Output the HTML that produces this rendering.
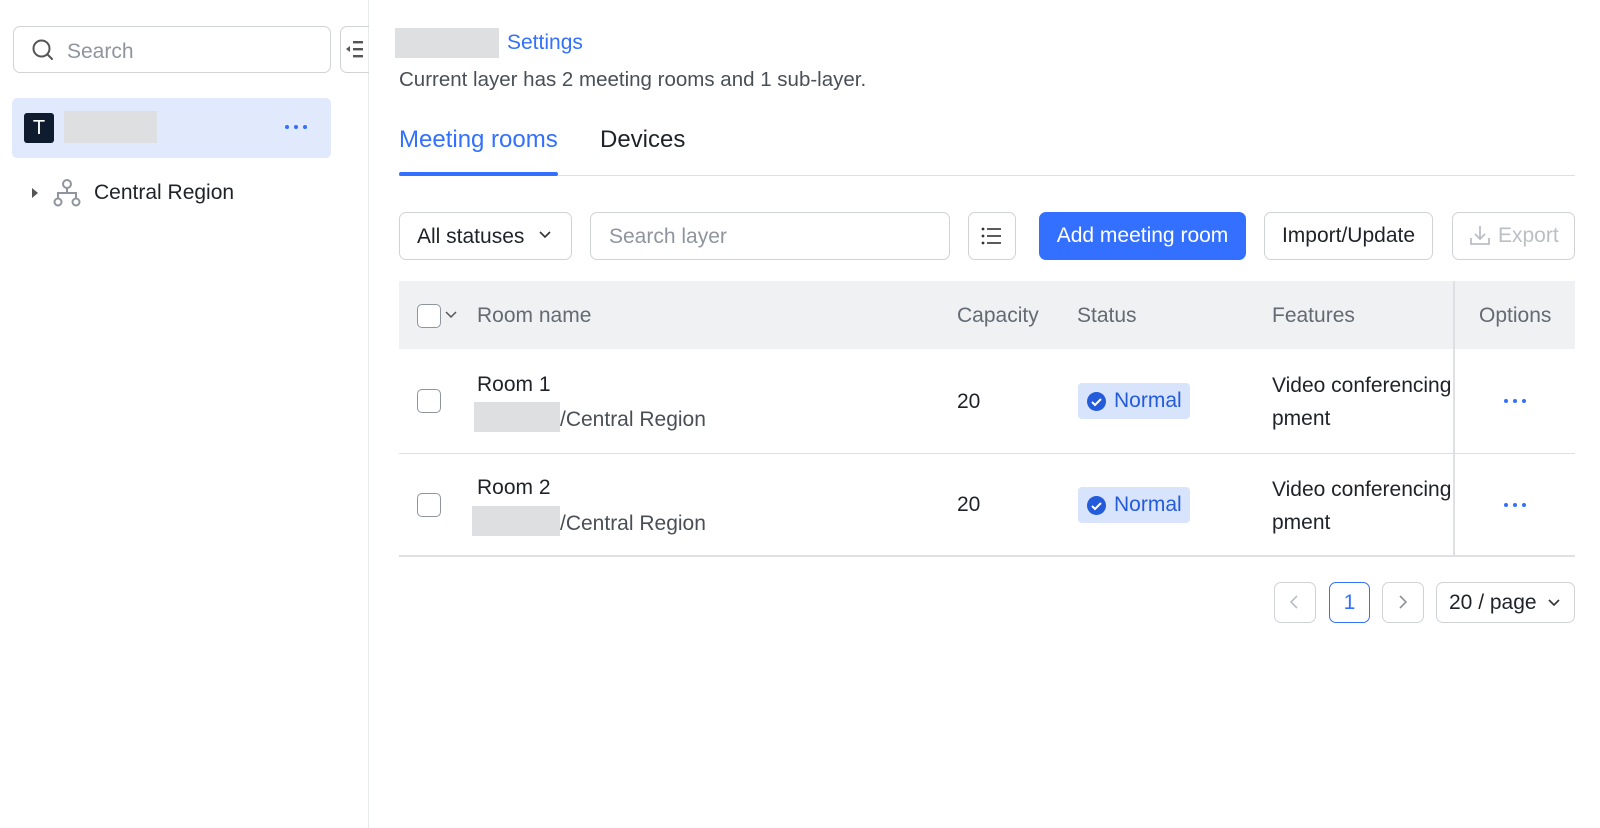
<!DOCTYPE html>
<html><head><meta charset="utf-8"><style>
*{box-sizing:border-box;margin:0;padding:0}
body{width:1600px;height:828px;background:#fff;font-family:"Liberation Sans",Arial,sans-serif;color:#1f2329;position:relative;overflow:hidden}
.a{position:absolute}
.box{border:1px solid #d0d3d6;border-radius:7px;background:#fff}
.t{white-space:nowrap}
.cb{position:absolute;width:24px;height:24px;border:1px solid #8f959e;border-radius:5px;background:#fff}
.dots{position:absolute;display:flex;gap:5px}
.dots i{width:4px;height:4px;border-radius:50%;background:#3370ff;display:block}
.badge{position:absolute;left:1078px;width:112px;height:36px;background:#d8e4fc;border-radius:4px;color:#245bdb;font-size:21px;line-height:36px;padding-left:36px}
.badge svg{position:absolute;left:9px;top:9px}
</style></head><body>
<div class="a" style="left:368px;top:0;width:1px;height:828px;background:#e8e9eb"></div>
<div class="a box" style="left:13px;top:26px;width:318px;height:47px"></div>
<svg class="a" style="left:31px;top:38px" width="24" height="24" viewBox="0 0 24 24"><circle cx="10.5" cy="10.5" r="8" fill="none" stroke="#555" stroke-width="2"/><path d="M16.5 16.5l4.5 4.5" stroke="#555" stroke-width="2" stroke-linecap="round"/></svg>
<div class="a t" style="left:67px;top:40px;font-size:21px;color:#8f959e">Search</div>
<div class="a" style="left:340px;top:26px;width:40px;height:47px;border:1px solid #d0d3d6;border-radius:7px 0 0 7px;border-right:none"></div>
<svg class="a" style="left:345px;top:39px" width="20" height="20" viewBox="0 0 20 20"><path d="M1 10l4-3v6z" fill="#555"/><rect x="8" y="2" width="10" height="2.4" fill="#555"/><rect x="8" y="9" width="10" height="2.4" fill="#555"/><rect x="8" y="16" width="10" height="2.4" fill="#555"/></svg>
<div class="a" style="left:369px;top:0;width:20px;height:828px;background:#fff"></div>
<div class="a" style="left:12px;top:98px;width:319px;height:60px;background:#e1eafd;border-radius:5px"></div>
<div class="a" style="left:24px;top:113px;width:30px;height:30px;background:#0f1b2e;border-radius:3px;color:#fff;font-size:20px;text-align:center;line-height:30px">T</div>
<div class="a" style="left:64px;top:111px;width:93px;height:32px;background:#dedfe1"></div>
<div class="dots" style="left:285px;top:125px"><i></i><i></i><i></i></div>
<svg class="a" style="left:30px;top:186px" width="10" height="14"><path d="M2 2l6 5-6 5z" fill="#555"/></svg>
<svg class="a" style="left:52px;top:178px" width="30" height="30" viewBox="0 0 30 30"><circle cx="15" cy="6" r="4" fill="none" stroke="#8f959e" stroke-width="2"/><circle cx="6" cy="24" r="3.5" fill="none" stroke="#8f959e" stroke-width="2"/><circle cx="24" cy="24" r="3.5" fill="none" stroke="#8f959e" stroke-width="2"/><path d="M15 10v5M6 20.5V15h18v5.5" fill="none" stroke="#8f959e" stroke-width="2"/></svg>
<div class="a t" style="left:94px;top:181px;font-size:21px">Central Region</div>
<div class="a" style="left:395px;top:28px;width:104px;height:30px;background:#dedfe1"></div>
<div class="a t" style="left:507px;top:31px;font-size:21px;color:#3370ff">Settings</div>
<div class="a t" style="left:399px;top:68px;font-size:20.5px;color:#4a4f57">Current layer has 2 meeting rooms and 1 sub-layer.</div>
<div class="a t" style="left:399px;top:126px;font-size:24px;color:#3370ff">Meeting rooms</div>
<div class="a t" style="left:600px;top:126px;font-size:24px">Devices</div>
<div class="a" style="left:399px;top:175px;width:1176px;height:1px;background:#dee0e3"></div>
<div class="a" style="left:399px;top:172px;width:159px;height:4px;background:#3370ff;border-radius:2px"></div>
<div class="a box" style="left:399px;top:212px;width:173px;height:48px"></div>
<div class="a t" style="left:417px;top:225px;font-size:21px">All statuses</div>
<svg class="a" style="left:538px;top:230px" width="14" height="10"><path d="M2 2l5 5 5-5" fill="none" stroke="#333" stroke-width="1.6"/></svg>
<div class="a box" style="left:590px;top:212px;width:360px;height:48px"></div>
<div class="a t" style="left:609px;top:225px;font-size:21px;color:#8f959e">Search layer</div>
<div class="a box" style="left:968px;top:212px;width:48px;height:48px"></div>
<svg class="a" style="left:980px;top:225px" width="24" height="22"><g fill="#333"><circle cx="3" cy="4" r="1.4"/><circle cx="3" cy="11" r="1.4"/><circle cx="3" cy="18" r="1.4"/><rect x="7" y="3.2" width="14" height="1.6"/><rect x="7" y="10.2" width="14" height="1.6"/><rect x="7" y="17.2" width="14" height="1.6"/></g></svg>
<div class="a" style="left:1039px;top:212px;width:207px;height:48px;background:#3370ff;border-radius:7px;color:#fff;font-size:21px;text-align:center;line-height:48px">Add meeting room</div>
<div class="a box" style="left:1264px;top:212px;width:169px;height:48px;font-size:21px;text-align:center;line-height:46px">Import/Update</div>
<div class="a box" style="left:1452px;top:212px;width:123px;height:48px;font-size:21px;color:#bbbfc4;line-height:46px;padding-left:45px">Export</div>
<svg class="a" style="left:1469px;top:224px" width="22" height="22"><path d="M11 2v13M6 10l5 5 5-5M2 14v6h18v-6" fill="none" stroke="#bbbfc4" stroke-width="1.8"/></svg>
<div class="a" style="left:399px;top:281px;width:1176px;height:68px;background:#f0f1f3"></div>
<div class="a" style="left:1453px;top:281px;width:2px;height:275px;background:#dee0e3"></div>
<div class="cb" style="left:417px;top:304px"></div>
<svg class="a" style="left:445px;top:311px" width="12" height="8"><path d="M1 1l5 5 5-5" fill="none" stroke="#555" stroke-width="1.5"/></svg>
<div class="a t" style="left:477px;top:304px;font-size:21px;color:#646a73">Room name</div>
<div class="a t" style="left:957px;top:304px;font-size:21px;color:#646a73">Capacity</div>
<div class="a t" style="left:1077px;top:304px;font-size:21px;color:#646a73">Status</div>
<div class="a t" style="left:1272px;top:304px;font-size:21px;color:#646a73">Features</div>
<div class="a t" style="left:1479px;top:304px;font-size:21px;color:#646a73">Options</div>
<div class="a" style="left:399px;top:453px;width:1176px;height:1px;background:#dee0e3"></div>
<div class="a" style="left:399px;top:555px;width:1176px;height:2px;background:#dee0e3"></div>
<div class="cb" style="left:417px;top:389px"></div>
<div class="a t" style="left:477px;top:373px;font-size:21px">Room 1</div>
<div class="a" style="left:474px;top:402px;width:86px;height:30px;background:#dedfe1"></div>
<div class="a t" style="left:560px;top:408px;font-size:21px;color:#4a4f57">/Central Region</div>
<div class="a t" style="left:957px;top:390px;font-size:21px">20</div>
<div class="badge" style="top:383px"><svg width="19" height="19"><circle cx="9.5" cy="9.5" r="9.5" fill="#245bdb"/><path d="M5 10l3 3 6-6" fill="none" stroke="#fff" stroke-width="2"/></svg>Normal</div>
<div class="a t" style="left:1272px;top:369px;font-size:21px;line-height:33px">Video conferencing<br>pment</div>
<div class="dots" style="left:1504px;top:399px"><i></i><i></i><i></i></div>
<div class="cb" style="left:417px;top:493px"></div>
<div class="a t" style="left:477px;top:476px;font-size:21px">Room 2</div>
<div class="a" style="left:472px;top:506px;width:88px;height:30px;background:#dedfe1"></div>
<div class="a t" style="left:560px;top:512px;font-size:21px;color:#4a4f57">/Central Region</div>
<div class="a t" style="left:957px;top:493px;font-size:21px">20</div>
<div class="badge" style="top:487px"><svg width="19" height="19"><circle cx="9.5" cy="9.5" r="9.5" fill="#245bdb"/><path d="M5 10l3 3 6-6" fill="none" stroke="#fff" stroke-width="2"/></svg>Normal</div>
<div class="a t" style="left:1272px;top:473px;font-size:21px;line-height:33px">Video conferencing<br>pment</div>
<div class="dots" style="left:1504px;top:503px"><i></i><i></i><i></i></div>
<div class="a box" style="left:1274px;top:582px;width:42px;height:41px"></div>
<svg class="a" style="left:1289px;top:594px" width="10" height="16"><path d="M8 2L2 8l6 6" fill="none" stroke="#bbbfc4" stroke-width="1.6"/></svg>
<div class="a" style="left:1329px;top:582px;width:41px;height:41px;border:1px solid #3370ff;border-radius:7px;color:#3370ff;font-size:21px;text-align:center;line-height:40px">1</div>
<div class="a box" style="left:1382px;top:582px;width:42px;height:41px"></div>
<svg class="a" style="left:1398px;top:594px" width="10" height="16"><path d="M2 2l6 6-6 6" fill="none" stroke="#8f959e" stroke-width="1.6"/></svg>
<div class="a box" style="left:1436px;top:582px;width:139px;height:41px;font-size:21px;line-height:39px;padding-left:12px">20 / page</div>
<svg class="a" style="left:1547px;top:598px" width="14" height="10"><path d="M2 2l5 5 5-5" fill="none" stroke="#333" stroke-width="1.6"/></svg>
</body></html>
